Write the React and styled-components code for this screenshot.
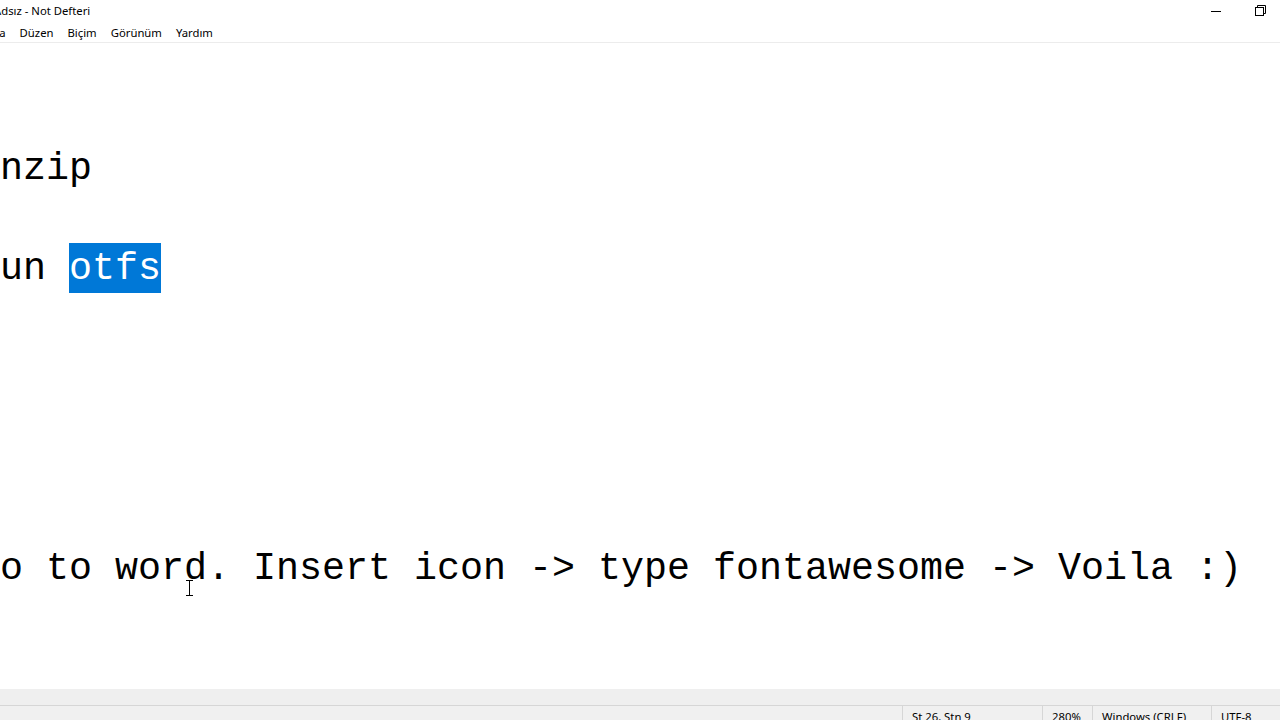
import styled, { createGlobalStyle } from "styled-components";

const GlobalStyle = createGlobalStyle`
  html, body {
    margin: 0;
    padding: 0;
    background: #ffffff;
    overflow: hidden;
  }
  #root {
    width: 1280px;
    height: 720px;
  }
`;

const UI_FONT = `"Noto Sans", "Open Sans", "DejaVu Sans", sans-serif`;

const LINES = [
  "",
  "",
  "nzip",
  "",
  [["un "], ["otfs", true]],
  "",
  "",
  "",
  "",
  "",
  "o to word. Insert icon -> type fontawesome -> Voila :)",
  "",
  "",
];

export default function App() {
  return (
    <Window>
      <GlobalStyle />
      <TitleBar>
        <Title>Adsız - Not Defteri</Title>
        <Controls>
          <ControlButton aria-label="minimize">
            <svg width="12" height="12" viewBox="0 0 12 12">
              <line x1="1" y1="6.5" x2="11" y2="6.5" stroke="#000" strokeWidth="1" />
            </svg>
          </ControlButton>
          <ControlButton aria-label="restore">
            <svg width="12" height="12" viewBox="0 0 12 12">
              <rect x="0.5" y="2.5" width="8" height="8" fill="none" stroke="#000" />
              <path d="M2.5 2.5 V0.5 H10.5 V8.5 H8.5" fill="none" stroke="#000" />
            </svg>
          </ControlButton>
        </Controls>
      </TitleBar>
      <MenuBar>
        {["Dosya", "Düzen", "Biçim", "Görünüm", "Yardım"].map((m, i) => (
          <MenuItem key={m} $first={i === 0}>
            {m}
          </MenuItem>
        ))}
      </MenuBar>
      <Editor>
        {LINES.map((line, i) => (
          <Line key={i}>
            {Array.isArray(line) ? (
              line.map(([t, sel], j) => (
                <Segment key={j} $selected={sel}>
                  {t}
                </Segment>
              ))
            ) : (
              <Segment>{line}</Segment>
            )}
          </Line>
        ))}
        <Caret />
      </Editor>
      <HScroll />
      <StatusBar>
        <StatusSpacer />
        <StatusCell $w={140}>St 26, Stn 9</StatusCell>
        <StatusCell $w={50}>280%</StatusCell>
        <StatusCell $w={119}>Windows (CRLF)</StatusCell>
        <StatusCell $w={69}>UTF-8</StatusCell>
      </StatusBar>
    </Window>
  );
}

const Window = styled.div`
  width: 1280px;
  height: 720px;
  display: flex;
  flex-direction: column;
  overflow: hidden;
  background: #ffffff;
  font-family: ${UI_FONT};
`;

const TitleBar = styled.div`
  height: 22px;
  display: flex;
  align-items: flex-start;
  justify-content: space-between;
  overflow: hidden;
`;

const Title = styled.div`
  font-size: 11.3px;
  line-height: 16px;
  padding-top: 3px;
  margin-left: -6px;
  color: #000;
  white-space: nowrap;
`;

const Controls = styled.div`
  display: flex;
  gap: 33px;
  padding-top: 5px;
  margin-right: 13px;
`;

const ControlButton = styled.div`
  width: 12px;
  height: 12px;
  display: flex;

  svg {
    display: block;
  }
`;

const MenuBar = styled.div`
  height: 20px;
  display: flex;
  align-items: center;
  border-bottom: 1px solid #ececec;
  overflow: hidden;
`;

const MenuItem = styled.div`
  font-size: 11.3px;
  color: #000;
  padding: 0 7px;
  margin-left: ${(p) => (p.$first ? "-34px" : "0")};
  white-space: nowrap;
`;

const Editor = styled.div`
  position: relative;
  flex: 1;
  overflow: hidden;
  font-family: "Liberation Mono", "DejaVu Sans Mono", monospace;
  font-size: 38.35px;
  color: #000;
`;

const Line = styled.div`
  height: 50px;
  display: flex;
  white-space: pre;
`;

const Segment = styled.span`
  height: 50px;
  box-sizing: border-box;
  padding-top: 3px;
  line-height: 47px;
  background: ${(p) => (p.$selected ? "#0078d7" : "transparent")};
  color: ${(p) => (p.$selected ? "#ffffff" : "#000000")};
`;

const Caret = styled.div`
  position: absolute;
  left: 186px;
  top: 537px;
  width: 7px;
  height: 16px;

  &::before {
    content: "";
    position: absolute;
    left: 3px;
    top: 0;
    width: 1px;
    height: 16px;
    background: #000;
  }
  &::after {
    content: "";
    position: absolute;
    left: 0;
    top: 0;
    width: 7px;
    height: 16px;
    border-top: 1px solid #000;
    border-bottom: 1px solid #000;
    box-sizing: border-box;
  }
`;

const HScroll = styled.div`
  height: 16px;
  background: #efefef;
  border-bottom: 1px solid #d6d6d6;
`;

const StatusBar = styled.div`
  height: 14px;
  display: flex;
  background: #f0f0f0;
  font-size: 11.3px;
  color: #000;
  overflow: hidden;
`;

const StatusSpacer = styled.div`
  flex: 1;
`;

const StatusCell = styled.div`
  width: ${(p) => p.$w}px;
  box-sizing: border-box;
  flex: none;
  border-left: 1px solid #d6d6d6;
  padding: 3px 0 0 9px;
  line-height: 16px;
  white-space: nowrap;
`;
